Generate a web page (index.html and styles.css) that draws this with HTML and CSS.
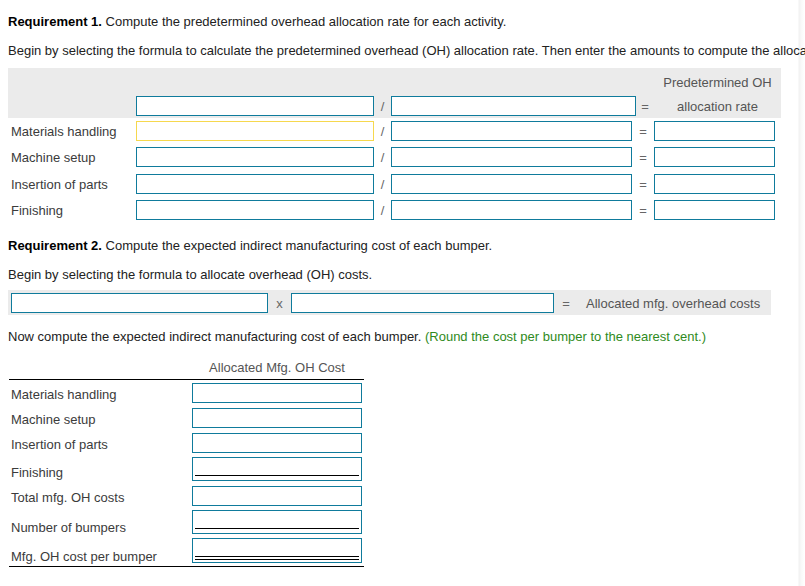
FILE: index.html
```html
<!DOCTYPE html>
<html>
<head>
<meta charset="utf-8">
<link rel="stylesheet" href="styles.css">
</head>
<body>
<div class="page">
  <p class="req"><b>Requirement 1.</b> Compute the predetermined overhead allocation rate for each activity.</p>
  <p class="begin">Begin by selecting the formula to calculate the predetermined overhead (OH) allocation rate. Then enter the amounts to compute the allocation rate for each activity.</p>

  <div class="t1">
    <div class="t1-head">
      <div class="t1-title">Predetermined OH</div>
      <div class="t1-hrow">
        <div class="t1-label"></div>
        <div class="box w-in1"></div>
        <div class="op w-slash">/</div>
        <div class="box w-in2h"></div>
        <div class="op w-eqh">=</div>
        <div class="t1-sub">allocation rate</div>
      </div>
    </div>
    <div class="t1-row r1">
      <div class="t1-label">Materials handling</div>
      <div class="box w-in1 active"></div>
      <div class="op w-slash">/</div>
      <div class="box w-in2"></div>
      <div class="op w-eq">=</div>
      <div class="box w-in3"></div>
    </div>
    <div class="t1-row r2">
      <div class="t1-label">Machine setup</div>
      <div class="box w-in1"></div>
      <div class="op w-slash">/</div>
      <div class="box w-in2"></div>
      <div class="op w-eq">=</div>
      <div class="box w-in3"></div>
    </div>
    <div class="t1-row r3">
      <div class="t1-label">Insertion of parts</div>
      <div class="box w-in1"></div>
      <div class="op w-slash">/</div>
      <div class="box w-in2"></div>
      <div class="op w-eq">=</div>
      <div class="box w-in3"></div>
    </div>
    <div class="t1-row r4">
      <div class="t1-label">Finishing</div>
      <div class="box w-in1"></div>
      <div class="op w-slash">/</div>
      <div class="box w-in2"></div>
      <div class="op w-eq">=</div>
      <div class="box w-in3"></div>
    </div>
  </div>

  <p class="req req2"><b>Requirement 2.</b> Compute the expected indirect manufacturing cost of each bumper.</p>
  <p class="begin begin2">Begin by selecting the formula to allocate overhead (OH) costs.</p>

  <div class="formula">
    <div class="box f-in1"></div>
    <div class="op f-x">x</div>
    <div class="box f-in2"></div>
    <div class="op f-eq">=</div>
    <div class="f-result">Allocated mfg. overhead costs</div>
  </div>

  <p class="now">Now compute the expected indirect manufacturing cost of each bumper. <span class="hint">(Round the cost per bumper to the nearest cent.)</span></p>

  <div class="t2">
    <div class="t2-head">
      <div class="t2-label"></div>
      <div class="t2-col">Allocated Mfg. OH Cost</div>
    </div>
    <div class="t2-row s1">
      <div class="t2-label">Materials handling</div>
      <div class="box t2-box"></div>
    </div>
    <div class="t2-row s2">
      <div class="t2-label">Machine setup</div>
      <div class="box t2-box"></div>
    </div>
    <div class="t2-row s3">
      <div class="t2-label">Insertion of parts</div>
      <div class="box t2-box"></div>
    </div>
    <div class="t2-row s4">
      <div class="t2-label">Finishing</div>
      <div class="box t2-box tall"><div class="uline single"></div></div>
    </div>
    <div class="t2-row s5">
      <div class="t2-label">Total mfg. OH costs</div>
      <div class="box t2-box"></div>
    </div>
    <div class="t2-row s6">
      <div class="t2-label">Number of bumpers</div>
      <div class="box t2-box tall"><div class="uline single"></div></div>
    </div>
    <div class="t2-row s7">
      <div class="t2-label">Mfg. OH cost per bumper</div>
      <div class="box t2-box tall dbl"><div class="uline double"></div></div>
    </div>
  </div>
</div>
</body>
</html>
```

FILE: styles.css
```css
html {
  overflow: hidden;
  background: linear-gradient(to right, #ffffff 0, #ffffff 798px, #f1f1f1 799px, #f8f8f8 801px, #ffffff 805px);
}

body {
  margin: 0;
  font-family: "Liberation Sans", Arial, sans-serif;
  font-size: 13px;
  color: #222;
}

.page {
  padding: 15px 0 0 8px;
  width: 1100px;
}

p {
  margin: 0;
  line-height: 14px;
  white-space: nowrap;
}

.req b {
  color: #000;
}

.begin {
  margin-top: 15px;
}

/* ---------- Table 1 ---------- */
.t1 {
  margin-top: 10px;
  width: 773px;
}

.t1-head {
  background: #ebebeb;
  height: 50px;
  box-sizing: border-box;
  padding-top: 7px;
}

.t1-title {
  margin-left: 646px;
  width: 127px;
  text-align: center;
  line-height: 14px;
  color: #555;
  padding-top: 1px;
}

.t1-hrow {
  display: flex;
  align-items: center;
  margin-top: 6px;
  height: 20px;
}

.t1-sub {
  width: 127px;
  text-align: center;
  color: #555;
  line-height: 14px;
  padding-top: 2px;
}

.t1-row {
  display: flex;
  align-items: center;
  height: 20px;
  margin-top: 6px;
}

.t1-row.r1 {
  margin-top: 3px;
}

.t1-row.r3 {
  margin-top: 7px;
}

.t1-label {
  width: 128px;
  flex: none;
  box-sizing: border-box;
  padding-left: 3px;
  color: #3b3b3b;
  line-height: 14px;
  padding-top: 2px;
}

.box {
  flex: none;
  height: 20px;
  box-sizing: border-box;
  border: 1px solid #0f7b9c;
  background: #fff;
}

.box.active {
  border-color: #f6d84e;
}

.op {
  flex: none;
  text-align: center;
  color: #666;
  line-height: 14px;
  padding-top: 2px;
}

.w-in1 { width: 238px; }
.w-slash { width: 17px; }
.w-in2 { width: 241px; }
.w-in2h { width: 245px; }
.w-eq { width: 22px; }
.w-eqh { width: 18px; }
.w-in3 { width: 121px; }

/* ---------- Requirement 2 ---------- */
.req2 {
  margin-top: 19px;
}

.begin2 {
  margin-top: 15px;
}

.formula {
  margin-top: 8px;
  width: 763px;
  height: 25px;
  box-sizing: border-box;
  padding: 3px 0 0 3px;
  background: #ebebeb;
  display: flex;
  align-items: flex-start;
}

.formula .op {
  line-height: 20px;
  padding-top: 1px;
}

.f-in1 { width: 257px; }
.f-x { width: 23px; }
.f-in2 { width: 263px; }
.f-eq { width: 24px; }

.f-result {
  margin-left: 8px;
  color: #555;
  line-height: 20px;
  padding-top: 1px;
}

.now {
  margin-top: 15px;
}

.hint {
  color: #2f8a22;
}

/* ---------- Table 2 ---------- */
.t2 {
  margin-top: 17px;
  margin-left: 1px;
  width: 355px;
}

.t2-head {
  display: flex;
  border-bottom: 1px solid #000;
  padding-bottom: 4px;
  line-height: 14px;
}

.t2-label {
  width: 183px;
  flex: none;
  box-sizing: border-box;
  padding-left: 2px;
  padding-bottom: 1px;
  line-height: 14px;
  color: #3b3b3b;
}

.t2-row.s6 .t2-label,
.t2-row.s7 .t2-label {
  padding-bottom: 0;
  margin-bottom: -1px;
}

.t2-col {
  width: 170px;
  text-align: center;
  color: #555;
}

.t2-row {
  display: flex;
  align-items: flex-end;
  margin-top: 5px;
}

.t2-row.s1 { margin-top: 3px; }
.t2-row.s4,
.t2-row.s6,
.t2-row.s7 { margin-top: 4px; }

.t2-box {
  width: 170px;
}

.t2-box.tall {
  height: 24px;
  display: flex;
  flex-direction: column;
  justify-content: flex-end;
  padding: 0 2px 4px;
}

.t2-box.tall.dbl {
  height: 25px;
  padding-bottom: 2px;
}

.uline.single {
  border-bottom: 1px solid #000;
}

.uline.double {
  border-bottom: 4px double #000;
}

.t2-row.s7 {
  border-bottom: 1px solid #000;
  padding-bottom: 3px;
}
```
